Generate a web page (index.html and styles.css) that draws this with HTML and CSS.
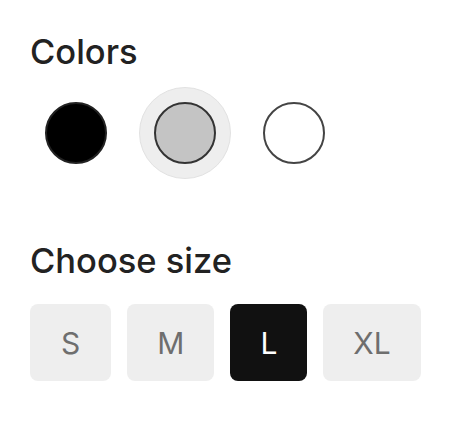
FILE: index.html
```html
<!DOCTYPE html>
<html>
<head>
<meta charset="utf-8">
<link rel="stylesheet" href="styles.css">
</head>
<body>
<div class="page">
  <h2 class="title">Colors</h2>
  <div class="swatches">
    <div class="swatch"><span class="dot dot-black"></span></div>
    <div class="swatch swatch-selected"><span class="dot dot-gray"></span></div>
    <div class="swatch"><span class="dot dot-white"></span></div>
  </div>
  <h2 class="title title-size">Choose size</h2>
  <div class="sizes">
    <button class="size">S</button>
    <button class="size">M</button>
    <button class="size size-active">L</button>
    <button class="size">XL</button>
  </div>
</div>
</body>
</html>
```
FILE: styles.css
```css
html, body {
  margin: 0;
  padding: 0;
  background: #ffffff;
}
.page {
  padding: 32px 30px 0 30px;
  font-family: Inter, "Noto Sans", sans-serif;
  color: #222222;
}
.title {
  margin: 0;
  font-size: 34.5px;
  line-height: 40px;
  font-weight: 500;
  color: #222222;
}
.swatches {
  display: flex;
  gap: 17px;
  margin-top: 15px;
}
.swatch {
  width: 92px;
  height: 92px;
  box-sizing: border-box;
  border-radius: 50%;
  display: flex;
  align-items: center;
  justify-content: center;
}
.swatch-selected {
  background: #eeeeee;
  border: 1px solid #e2e2e2;
}
.dot {
  width: 62px;
  height: 62px;
  box-sizing: border-box;
  border-radius: 50%;
  border: 2px solid #333333;
}
.dot-black {
  background: #000000;
  border-color: #222222;
}
.dot-gray {
  background: #c4c4c4;
}
.dot-white {
  background: #ffffff;
  border-color: #444444;
}
.title-size {
  margin-top: 62px;
}
.sizes {
  display: flex;
  gap: 16px;
  margin-top: 23px;
}
.size {
  height: 77px;
  min-width: 77px;
  padding: 0 30px;
  border: none;
  border-radius: 8px;
  background: #eeeeee;
  color: #6e6e6e;
  font-family: Inter, "Noto Sans", sans-serif;
  font-size: 30px;
  font-weight: 400;
}
.size:first-child {
  padding: 0 31px;
}
.size-active {
  background: #111111;
  color: #ffffff;
}
```
